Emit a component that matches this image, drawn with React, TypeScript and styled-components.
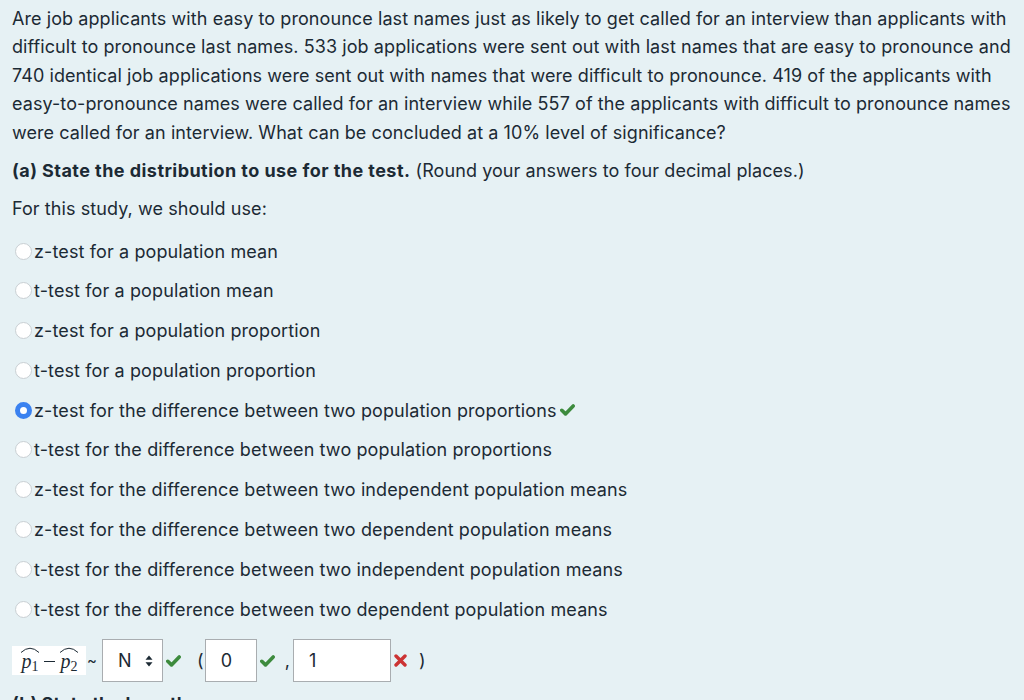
import React from "react";
import styled, {createGlobalStyle} from "styled-components";

const GlobalStyle = createGlobalStyle`
  html, body {
    margin: 0;
    padding: 0;
    background: #e6f1f4;
  }
  body {
    font-family: Inter, "Open Sans", sans-serif;
    color: #1c2a34;
    font-size: 18px;
    letter-spacing: 0.08px;
  }
`
const Page = styled.div`
  padding: 5px 12px 0 12px;
  height: 700px;
  overflow: hidden;
  box-sizing: border-box;
`
const Para = styled.p`
  margin: 0;
  line-height: 28.4px;
  white-space: nowrap;
`
const Heading = styled.p`
  margin: 10px 0 0 0;
  line-height: 28.4px;
  b {
    font-weight: 700;
    letter-spacing: 0.45px;
  }
`
const Lead = styled.p`
  margin: 10px 0 0 0;
  line-height: 28.4px;
`
const Options = styled.div`
  display: flex;
  flex-direction: column;
  gap: 11.4px;
  margin-top: 13px;
`
const Option = styled.label`
  display: flex;
  align-items: center;
  height: 28.4px;
  margin-left: 3px;
  letter-spacing: 0.12px;
`
const Radio = styled.span<{checked?: boolean}>`
  width: 17px;
  height: 17px;
  border-radius: 50%;
  box-sizing: border-box;
  flex-shrink: 0;
  margin-right: 2px;
  background: #fff;
  border: ${({checked}) => checked ? '5px solid #3b82f0' : '1px solid #c9cfd3'};
`
const Answer = styled.div`
  display: flex;
  align-items: center;
  margin-top: 16px;
  height: 43px;
`
const MathBox = styled.span`
  display: inline-flex;
  align-items: flex-end;
  background: #fff;
  height: 29px;
  width: 74px;
  padding: 0 0 4px 8px;
  font-family: "Liberation Serif", "DejaVu Serif", serif;
  font-size: 20px;
  line-height: 1;
  box-sizing: border-box;
  letter-spacing: 0;
`
const HatVar = styled.span`
  display: inline-flex;
  flex-direction: column;
  align-items: center;
  font-style: italic;
  svg {
    margin-bottom: -2px;
  }
  sub {
    font-style: normal;
    font-size: 14px;
    vertical-align: -3px;
    line-height: 0;
  }
`
const Minus = styled.span`
  display: inline-block;
  width: 11px;
  height: 1.3px;
  background: #1c2a34;
  margin: 0 4px 9px 4px;
`
const Tilde = styled.span`
  font-size: 15px;
  margin: 0 5px 0 1px;
`
const Field = styled.div<{w: number}>`
  width: ${({w}) => w}px;
  height: 43px;
  box-sizing: border-box;
  border: 1px solid #a9adb0;
  background: #fff;
  display: flex;
  align-items: center;
  padding-left: 15px;
`
const Arrows = styled.span`
  margin-left: 13px;
  display: inline-flex;
`
const Paren = styled.span<{ml: number, mr: number}>`
  margin: 0 ${({mr}) => mr}px 0 ${({ml}) => ml}px;
`
const Mark = styled.span`
  display: inline-flex;
  margin-left: 3px;
`
const Next = styled.p`
  margin: 8px 0 0 0;
  font-weight: 700;
  line-height: 28.4px;
`

const Check = () => (
    <svg width="15" height="12" viewBox="0 0 15 12">
        <path d="M1.8 6.3 L5.5 9.9 L13.2 2" fill="none" stroke="#3d8b3d" strokeWidth="3.6" strokeLinecap="round" strokeLinejoin="round"/>
    </svg>
)
const Cross = () => (
    <svg width="13" height="13" viewBox="0 0 13 13">
        <path d="M2 2 L11 11 M11 2 L2 11" stroke="#cc3333" strokeWidth="3.4" strokeLinecap="round"/>
    </svg>
)
const Hat = () => (
    <svg width="20" height="7" viewBox="0 0 20 7">
        <path d="M1 6.5 Q10 -2 19 6.5" fill="none" stroke="#1c2a34" strokeWidth="1"/>
    </svg>
)

const options = [
    'z-test for a population mean',
    't-test for a population mean',
    'z-test for a population proportion',
    't-test for a population proportion',
    'z-test for the difference between two population proportions',
    't-test for the difference between two population proportions',
    'z-test for the difference between two independent population means',
    'z-test for the difference between two dependent population means',
    't-test for the difference between two independent population means',
    't-test for the difference between two dependent population means',
]

const App = () => {
    return (
        <>
            <GlobalStyle/>
            <Page>
                <Para>
                    Are job applicants with easy to pronounce last names just as likely to get called for an interview than applicants with<br/>
                    difficult to pronounce last names. 533 job applications were sent out with last names that are easy to pronounce and<br/>
                    740 identical job applications were sent out with names that were difficult to pronounce. 419 of the applicants with<br/>
                    easy-to-pronounce names were called for an interview while 557 of the applicants with difficult to pronounce names<br/>
                    were called for an interview. What can be concluded at a 10% level of significance?
                </Para>
                <Heading><b>(a) State the distribution to use for the test.</b> (Round your answers to four decimal places.)</Heading>
                <Lead>For this study, we should use:</Lead>
                <Options>
                    {options.map((o, i) => (
                        <Option key={i}>
                            <Radio checked={i === 4}/>
                            {o}
                            {i === 4 && <Mark><Check/></Mark>}
                        </Option>
                    ))}
                </Options>
                <Answer>
                    <MathBox>
                        <HatVar><Hat/><span>p<sub>1</sub></span></HatVar>
                        <Minus/>
                        <HatVar><Hat/><span>p<sub>2</sub></span></HatVar>
                    </MathBox>
                    <Tilde>~</Tilde>
                    <Field w={61}>
                        N
                        <Arrows>
                            <svg width="8" height="12" viewBox="0 0 8 12">
                                <path d="M4 0.5 L7.5 4.8 H0.5 Z M4 11.5 L7.5 7.2 H0.5 Z" fill="#1c2a34"/>
                            </svg>
                        </Arrows>
                    </Field>
                    <Mark><Check/></Mark>
                    <Paren ml={16} mr={1}>(</Paren>
                    <Field w={52}>0</Field>
                    <Mark><Check/></Mark>
                    <Paren ml={10} mr={3}>,</Paren>
                    <Field w={98}>1</Field>
                    <Mark><Cross/></Mark>
                    <Paren ml={12} mr={0}>)</Paren>
                </Answer>
                <Next>(b) State the hypotheses</Next>
            </Page>
        </>
    )
}
export default App;
